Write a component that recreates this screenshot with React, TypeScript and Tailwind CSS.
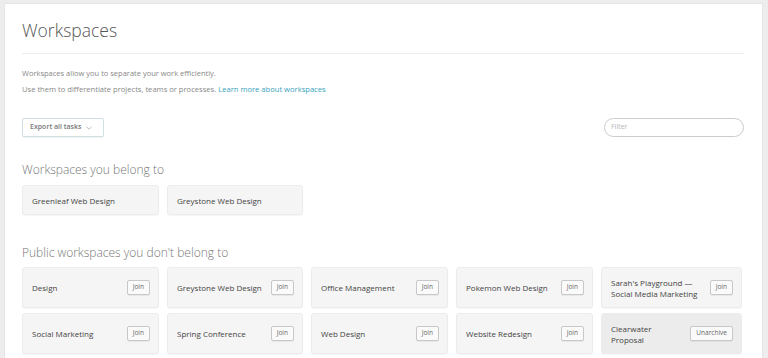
import React from 'react';

const belong = ['Greenleaf Web Design', 'Greystone Web Design'];

const publicSpaces: { name: string; action: string; archived?: boolean }[] = [
  { name: 'Design', action: 'Join' },
  { name: 'Greystone Web Design', action: 'Join' },
  { name: 'Office Management', action: 'Join' },
  { name: 'Pokemon Web Design', action: 'Join' },
  { name: "Sarah's Playground — Social Media Marketing", action: 'Join' },
  { name: 'Social Marketing', action: 'Join' },
  { name: 'Spring Conference', action: 'Join' },
  { name: 'Web Design', action: 'Join' },
  { name: 'Website Redesign', action: 'Join' },
  { name: 'Clearwater Proposal', action: 'Unarchive', archived: true },
];

const WorkspaceCard = ({ name, action, archived }: { name: string; action?: string; archived?: boolean }) => (
  <div
    className={
      'flex items-center justify-between rounded-[3px] border border-[#ececec] pl-[9px] pr-[8px] shadow-[0_1px_1px_rgba(0,0,0,0.04)] ' +
      (archived ? 'bg-[#ececec]' : 'bg-[#f5f5f5]') +
      (action ? ' h-[41px]' : ' h-[30px]')
    }
  >
    <span className={'text-[8px] leading-[11px] text-[#444] ' + (archived ? 'max-w-[60px]' : 'max-w-[100px]')}>{name}</span>
    {action && (
      <button className="shrink-0 h-[15px] px-[5px] rounded-[2px] border border-[#c8c8c8] bg-[#fafafa] text-[6.5px] leading-none text-[#666] shadow-[0_1px_0_rgba(0,0,0,0.05)]">
        {action}
      </button>
    )}
  </div>
);

export default function App() {
  return (
    <div className="min-h-[358px] bg-[#ededed] pt-[3px] pl-[4px] pr-[5px] font-['Open_Sans',sans-serif]">
      <div className="bg-white border border-[#e6e6e6] min-h-[360px] pl-[17px] pr-[18px] pt-[12px]">
        <h1 className="text-[17.5px] leading-[28px] font-light text-[#555]">Workspaces</h1>
        <div className="mt-[9px] h-px bg-[#eeeeee]" />
        <p className="mt-[13px] text-[7.5px] leading-[12px] text-[#888]">Workspaces allow you to separate your work efficiently.</p>
        <p className="mt-[4px] text-[7.6px] leading-[12px] text-[#888]">
          Use them to differentiate projects, teams or processes.{' '}
          <span className="text-[#38a3bd]">Learn more about workspaces</span>
        </p>
        <div className="mt-[23px] flex items-center justify-between">
          <button className="flex items-center gap-[5px] h-[19px] w-[82px] pl-[7px] rounded-[2px] border border-[#cfe0e2] bg-white text-[7px] font-semibold text-[#777] shadow-[0_1px_1px_rgba(0,0,0,0.05)]">
            Export all tasks
            <svg width="6" height="4" viewBox="0 0 6 4" fill="none">
              <path d="M0.5 0.8 L3 3.2 L5.5 0.8" stroke="#aaa" strokeWidth="0.8" />
            </svg>
          </button>
          <div className="h-[19px] w-[140px] rounded-full border border-[#cccccc] flex items-center pl-[6px]">
            <span className="text-[7px] text-[#b5b5b5]">Filter</span>
          </div>
        </div>
        <h2 className="mt-[24px] text-[12px] leading-[18px] font-light text-[#777]">Workspaces you belong to</h2>
        <div className="mt-[6px] grid grid-cols-[137px_136px_137px_137px_1fr] gap-[8px] pr-[2px]">
          {belong.map((w) => (
            <WorkspaceCard key={w} name={w} />
          ))}
        </div>
        <h2 className="mt-[29px] text-[12px] leading-[18px] font-light text-[#777]">Public workspaces you don't belong to</h2>
        <div className="mt-[5px] grid grid-cols-[137px_136px_137px_137px_1fr] gap-x-[8px] gap-y-[5px] pr-[2px]">
          {publicSpaces.map((w) => (
            <WorkspaceCard key={w.name} name={w.name} action={w.action} archived={w.archived} />
          ))}
        </div>
      </div>
    </div>
  );
}
